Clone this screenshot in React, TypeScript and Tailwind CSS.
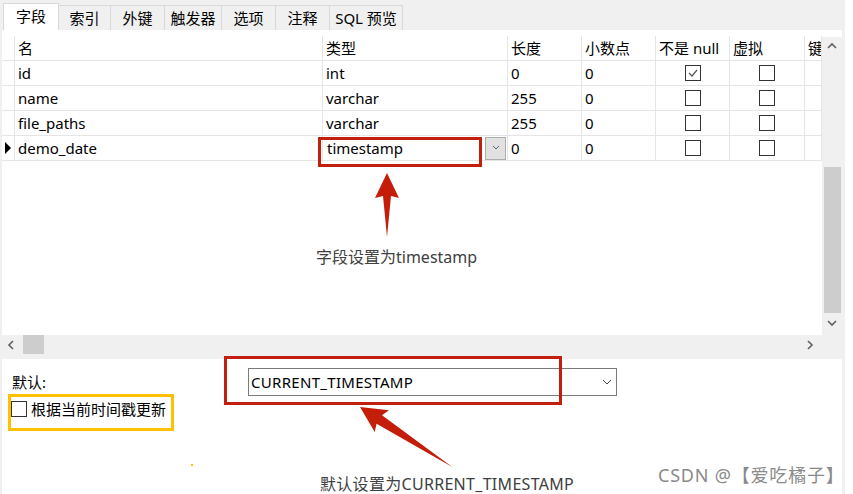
import React from 'react'

const tabs = [
  { name: '字段', w: 'w-[56px]', active: true },
  { name: '索引', w: 'w-[52px]' },
  { name: '外键', w: 'w-[54px]' },
  { name: '触发器', w: 'w-[57px]' },
  { name: '选项', w: 'w-[54px]' },
  { name: '注释', w: 'w-[54px]' },
  { name: 'SQL 预览', w: 'w-[73px]' },
]

const rows = [
  { name: 'id', type: 'int', len: '0', dec: '0', notNull: true },
  { name: 'name', type: 'varchar', len: '255', dec: '0' },
  { name: 'file_paths', type: 'varchar', len: '255', dec: '0' },
  { name: 'demo_date', type: 'timestamp', len: '0', dec: '0', current: true },
]

const cell = 'h-full border-r border-b border-[#e5e5e5] flex items-center overflow-hidden whitespace-nowrap'

function Chevron({ dir, className }: { dir: 'up' | 'down' | 'left' | 'right'; className?: string }) {
  const pts = {
    up: '2,7 6,3 10,7',
    down: '2,4 6,8 10,4',
    left: '7,2 3,6 7,10',
    right: '4,2 8,6 4,10',
  }[dir]
  return (
    <svg width="12" height="12" viewBox="0 0 12 12" className={className}>
      <polyline points={pts} fill="none" stroke="#606060" strokeWidth="1.6" />
    </svg>
  )
}

function Box({ checked }: { checked?: boolean }) {
  return (
    <span className="w-4 h-4 border border-[#333] bg-white flex items-center justify-center">
      {checked && (
        <svg width="12" height="12" viewBox="0 0 12 12">
          <polyline points="2,6 5,9 10,3" fill="none" stroke="#555" strokeWidth="1.2" />
        </svg>
      )}
    </span>
  )
}

function Row({ r }: { r: (typeof rows)[number] }) {
  return (
    <div className="flex h-[25px]">
      <div className={`${cell} w-[13px] justify-center`}>
        {r.current && (
          <svg width="6" height="12" viewBox="0 0 6 12">
            <polygon points="0,0 6,6 0,12" fill="#000" />
          </svg>
        )}
      </div>
      <div className={`${cell} w-[308px] pl-[3px] pt-[1px]`}>{r.name}</div>
      <div className={`${cell} w-[185px] pl-[3px] justify-between`}>
        <span className={r.current ? 'pl-[1px] pt-[1px]' : 'pt-[1px]'}>{r.type}</span>
        {r.current && (
          <span className="w-[21px] h-[23px] mr-[1px] bg-[#e1e1e1] border border-[#adadad] flex items-center justify-center">
            <svg width="10" height="8" viewBox="0 0 10 8">
              <polyline points="2,2 5,5 8,2" fill="none" stroke="#666" strokeWidth="1" />
            </svg>
          </span>
        )}
      </div>
      <div className={`${cell} w-[74px] pl-[3px] pt-[1px]`}>{r.len}</div>
      <div className={`${cell} w-[74px] pl-[3px] pt-[1px]`}>{r.dec}</div>
      <div className={`${cell} w-[74px] justify-center`}>
        <Box checked={r.notNull} />
      </div>
      <div className={`${cell} w-[75px] justify-center`}>
        <Box />
      </div>
      <div className={`${cell} flex-1`} />
    </div>
  )
}

export default function App() {
  return (
    <div
      className="relative w-[853px] h-[494px] overflow-hidden bg-white text-[15px] leading-none text-black"
      style={{ fontFamily: '"Noto Sans", "Noto Sans CJK SC", sans-serif' }}
    >
      <div className="w-[845px] h-full bg-[#f0f0f0] pl-[2px] pr-[3px] flex flex-col">
        {/* Tabs */}
        <div className="h-[30px] flex items-end pl-[1px] shrink-0">
          {tabs.map((t) =>
            t.active ? (
              <div
                key={t.name}
                className={`${t.w} h-[27px] bg-white border-t border-l border-r border-[#d9d9d9] flex items-center justify-center pb-[2px]`}
              >
                {t.name}
              </div>
            ) : (
              <div
                key={t.name}
                className={`${t.w} h-[25px] bg-[#f0f0f0] border-t border-r border-[#d9d9d9] flex items-center justify-center`}
              >
                {t.name}
              </div>
            )
          )}
        </div>

        {/* Grid */}
        <div className="h-[305px] flex bg-white shrink-0">
          <div className="w-[820px] pt-[6px] flex flex-col">
            <div className="flex h-[25px]">
              <div className={`${cell} w-[13px]`} />
              <div className={`${cell} w-[308px] pl-[3px]`}>名</div>
              <div className={`${cell} w-[185px] pl-[3px]`}>类型</div>
              <div className={`${cell} w-[74px] pl-[3px]`}>长度</div>
              <div className={`${cell} w-[74px] pl-[3px]`}>小数点</div>
              <div className={`${cell} w-[74px] pl-[3px]`}>不是 null</div>
              <div className={`${cell} w-[75px] pl-[3px]`}>虚拟</div>
              <div className={`${cell} flex-1 pl-[3px]`}>键</div>
            </div>
            {rows.map((r) => (
              <Row key={r.name} r={r} />
            ))}
          </div>
          <div className="w-[20px] mt-[7px] bg-[#f0f0f0] flex flex-col items-center">
            <Chevron dir="up" className="mt-[4px]" />
            <div className="w-[17px] h-[146px] bg-[#cdcdcd] mt-[114px]" />
            <Chevron dir="down" className="mt-[4px]" />
          </div>
        </div>

        {/* Horizontal scrollbar */}
        <div className="h-[20px] flex shrink-0">
          <div className="w-[820px] flex items-center">
            <Chevron dir="left" className="ml-[4px]" />
            <div className="w-[21px] h-[19px] bg-[#cdcdcd] ml-[5px] self-start" />
            <div className="flex-1" />
            <Chevron dir="right" className="mr-[6px]" />
          </div>
        </div>
        <div className="h-[4px] shrink-0" />

        {/* Bottom panel */}
        <div className="flex-1 bg-white pl-[9px] pt-[9px]">
          <div className="flex items-center">
            <span className="w-[237px] pl-[1px]">默认:</span>
            <div className="w-[369px] h-[28px] border border-[#7a7a7a] flex items-center justify-between pl-[2px] pr-[4px]">
              <span className="tracking-[0.3px]">CURRENT_TIMESTAMP</span>
              <svg width="10" height="8" viewBox="0 0 10 8">
                <polyline points="1,2 5,6 9,2" fill="none" stroke="#444" strokeWidth="1" />
              </svg>
            </div>
          </div>
          <div className="flex items-center gap-[4px] mt-[5px]">
            <Box />
            <span>根据当前时间戳更新</span>
          </div>
        </div>
      </div>

      {/* Annotations */}
      <div className="absolute left-[318px] top-[137px] w-[164px] h-[30px] border-[3px] border-[#c2200e]" />
      <div className="absolute left-[224px] top-[356px] w-[338px] h-[49px] border-[3px] border-[#c2200e]" />
      <div className="absolute left-[8px] top-[394px] w-[166px] h-[37px] border-[3px] border-[#ffc000]" />
      <div className="absolute left-[191px] top-[464px] w-[2px] h-[2px] bg-[#ffc000]" />

      <svg className="absolute inset-0 pointer-events-none" width="853" height="494" viewBox="0 0 853 494">
        <polygon points="387,173 399,198 391,196 387,237 383,196 375,198" fill="#c41d0a" />
        <g transform="translate(360 407) rotate(-57)">
          <polygon points="0,0 13,26 5,23 0,110 -5,23 -13,26" fill="#c41d0a" />
        </g>
      </svg>

      <div className="absolute left-[316px] top-[249px] text-[16px] text-[#404040] whitespace-nowrap">
        字段设置为timestamp
      </div>
      <div className="absolute left-[320px] top-[476px] text-[16px] text-[#404040] whitespace-nowrap tracking-[0.3px]">
        默认设置为CURRENT_TIMESTAMP
      </div>
      <div
        className="absolute left-[658px] top-[466px] text-[18px] text-[#8a8a8a] whitespace-nowrap tracking-[0.8px]"
        style={{ textShadow: '0 0 2px #fff' }}
      >
        CSDN @【爱吃橘子】
      </div>
    </div>
  )
}
